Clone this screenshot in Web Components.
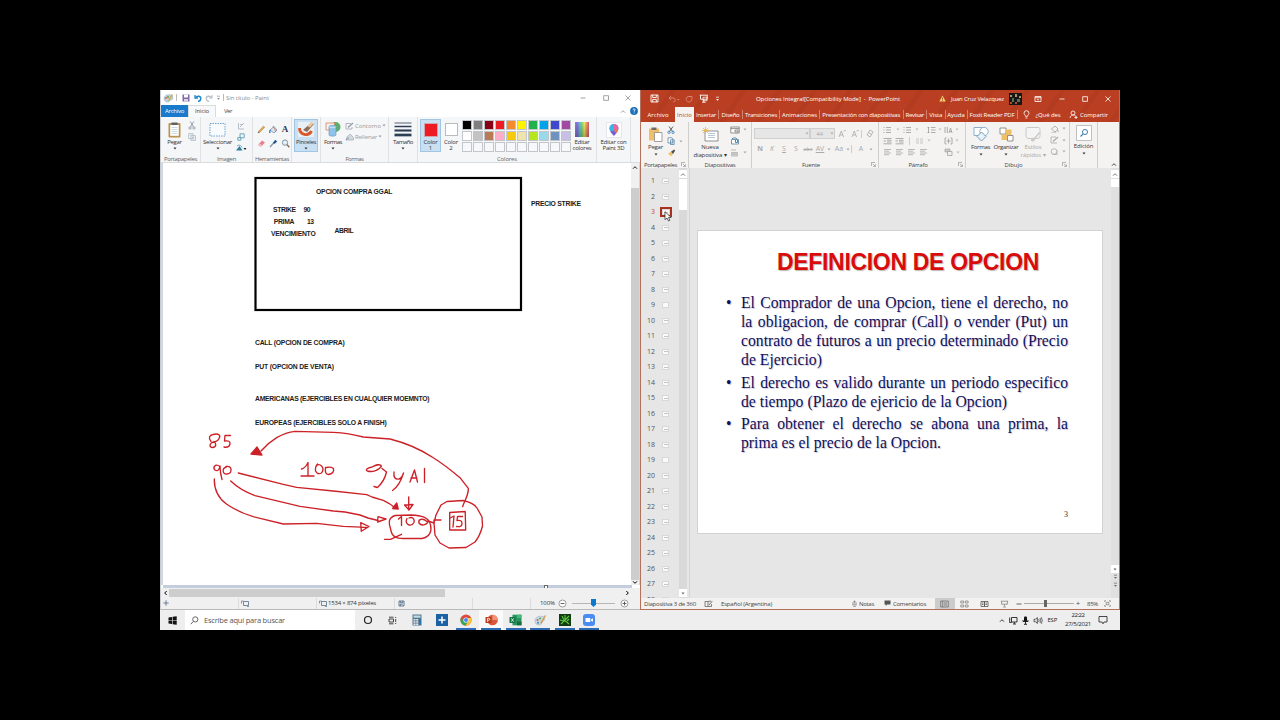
<!DOCTYPE html>
<html lang="es">
<head>
<meta charset="utf-8">
<title>Escritorio</title>
<style>
  body {
    margin: 0;
    width: 1280px;
    height: 720px;
    overflow: hidden;
    background: #000;
    font-family: "Open Sans", "Noto Sans", sans-serif;
    font-size: 6px;
    display: grid;
    place-items: center;
  }
</style>
</head>
<body>
<desk-top></desk-top>

<script>
const ICONS = {
  palette: [11, 10, '<path d="M1 6C1 2 5 1 8 2c3 1 2 5 0 5-2 0-1 2-3 2S1 8 1 6z" fill="#b9d3e2" stroke="#8ca6b4" stroke-width=".5"/><circle cx="3" cy="5" r="1" fill="#e56b3c"/><circle cx="5" cy="4" r="1" fill="#55a655"/><path d="M5 7l4-6 1 1-4 6z" fill="#e0a546"/>'],
  disk: [8, 8, '<path d="M.5.5h7v7h-7z" fill="#8268a6"/><path d="M2 .5h4v3H2z" fill="#fff"/><path d="M2 5h4v2.5H2z" fill="#d9d2e6"/>'],
  undo: [8, 8, '<path d="M1 1v3h3" fill="none" stroke="#2089c9" stroke-width="1.300"/><path d="M1.300 3.700C3 1.500 6.800 1.800 6.800 4.500c0 1.800-1.300 2.700-2.800 3" fill="none" stroke="#2089c9" stroke-width="1.500"/>'],
  redo: [8, 8, '<path d="M7 1v3H4" fill="none" stroke="#b8c0c8" stroke-width="1.100"/><path d="M6.700 3.700C5 1.500 1.200 1.800 1.200 4.500c0 1.800 1.300 2.700 2.800 3" fill="none" stroke="#b8c0c8" stroke-width="1.300"/>'],
  caret: [4, 3, '<path d="M.5.600h3L2 2.400z" fill="currentColor"/>'],
  quick: [5, 6, '<path d="M1 1.200h3" stroke="currentColor" stroke-width=".7"/><path d="M1 3h3L2.500 4.800z" fill="currentColor"/>'],
  min: [8, 8, '<path d="M1.500 4h5" stroke="currentColor" stroke-width=".8"/>'],
  max: [8, 8, '<path d="M1.700 1.700h4.800v4.600H1.700z" fill="none" stroke="currentColor" stroke-width=".8"/>'],
  close: [8, 8, '<path d="M1.500 1.500l5 5M6.500 1.500l-5 5" stroke="currentColor" stroke-width=".8"/>'],
  up: [6, 5, '<path d="M1 3.700l2-2 2 2" fill="none" stroke="currentColor" stroke-width=".9"/>'],
  down: [6, 5, '<path d="M1 1.300l2 2 2-2" fill="none" stroke="currentColor" stroke-width="1"/>'],
  left: [5, 6, '<path d="M3.700 1l-2 2 2 2" fill="none" stroke="currentColor" stroke-width="1"/>'],
  right: [5, 6, '<path d="M1.300 1l2 2-2 2" fill="none" stroke="currentColor" stroke-width="1"/>'],
  help: [8, 8, '<circle cx="4" cy="4" r="3.900" fill="#1b6fb8"/><path d="M3 3.100C3 1.500 5.200 1.600 5 3c-.1.800-1 .8-1 1.700M4 5.600v.8" stroke="#fff" stroke-width=".9" fill="none"/>'],
  clipboard: [15, 17, '<rect x="1.500" y="2" width="12" height="14.500" rx="1" fill="#b99254"/><rect x="3.200" y="4" width="8.600" height="10.800" fill="#fff"/><path d="M4.500 6.500h6M4.500 8.500h6M4.500 10.500h6M4.500 12.500h6" stroke="#b7c9dc" stroke-width=".7"/><path d="M4.500 1.500h6v2.500h-6z" fill="#5c6066"/>'],
  cut: [8, 9, '<path d="M2.300.5L5.500 6M5.700.5L2.500 6" stroke="#8c99a8" stroke-width=".9"/><circle cx="2" cy="7" r="1.200" fill="none" stroke="#8c99a8" stroke-width=".8"/><circle cx="6" cy="7" r="1.200" fill="none" stroke="#8c99a8" stroke-width=".8"/>'],
  copy: [8, 8, '<path d="M.6.600h4.500v5H.6zM3 2.600h4.500v5H3z" fill="#f3f5f8" stroke="#a6b1bf" stroke-width=".7"/><path d="M4 4.500h2.500M4 6h2.500M1.500 2h2" stroke="#a6b1bf" stroke-width=".5"/>'],
  marquee: [17, 15, '<path d="M1 1.500h15v12.500H1z" fill="#f9fcff" stroke="#4f8fc4" stroke-width=".8" stroke-dasharray="1.500 1"/>'],
  crop: [8, 8, '<path d="M1.500 1v6h5.500M3 5l4-4M3 2.500h3" fill="none" stroke="#a4b3bf" stroke-width=".8"/>'],
  resize: [8, 8, '<path d="M3 .8h4.200v4H3z" fill="none" stroke="#4a93ab" stroke-width=".8"/><path d="M.8 4.500h3v2.700h-3z" fill="#e8f4f8" stroke="#4a93ab" stroke-width=".8"/>'],
  rotate: [12, 8, '<path d="M1 6.500h6.500L4.500 2z" fill="#2e7f9e"/><path d="M2 2.200c2-2 4-1 5 1.300" fill="none" stroke="#54a0bc" stroke-width=".9"/><path d="M8.500 4h3L10 6z" fill="#222"/>'],
  pencil: [9, 9, '<path d="M1 8l1-2.200L6.500 1l1.300 1.200L3.200 7z" fill="#e0a94f" stroke="#9c7b45" stroke-width=".4"/><path d="M1 8l1.600-.7-.8-.9z" fill="#333"/>'],
  bucket: [9, 9, '<path d="M1 5l4-3.500L8 5 5 8z" fill="#dce8f1" stroke="#6e8295" stroke-width=".7"/><path d="M1.500 5C.5 6 .8 7.500 1 8" stroke="#3c82c0" stroke-width="1.400" fill="none"/><path d="M4 1l3 6" stroke="#c36a5a" stroke-width=".8"/>'],
  eraser: [9, 9, '<path d="M1 6l4-4.500L8 3.500 4 7.700z" fill="#e87f8c"/><path d="M1 6l3 1.700L5.300 6.400 2.500 4.400z" fill="#f5bfc4"/>'],
  dropper: [9, 9, '<path d="M1 8l4-4.500" stroke="#8496a8" stroke-width="1.300"/><path d="M4 3.500L6.300.8 8.200 2.600 5.500 5z" fill="#225a94"/>'],
  zoom: [9, 9, '<circle cx="4" cy="3.600" r="2.700" fill="#e4f0f8" stroke="#7e8c98" stroke-width=".9"/><path d="M6 5.600l2.300 2.600" stroke="#7e5f46" stroke-width="1.300"/>'],
  brush: [18, 17, '<path d="M1 1h16v15H1z" fill="#e8eff5"/><path d="M2.500 7c0 7 9 9 12 3" fill="none" stroke="#d8582c" stroke-width="2.800"/><path d="M6 9l8.500-7.500L17 3l-7 8z" fill="#8e6b58"/><path d="M10 5l4.500-4L17 2l-4 4.500z" fill="#e9c79f"/>'],
  shapes: [17, 17, '<circle cx="10.500" cy="6" r="5" fill="#5caf6a"/><path d="M1 2h8.500v7H1z" fill="#f2f4f6" stroke="#e18250" stroke-width=".8"/><path d="M4 5.500c0-1.500 7-1.500 7 0v8.500c0 1.500-7 1.500-7 0z" fill="#8fc3e9" stroke="#5a93c0" stroke-width=".6"/><path d="M4 5.500c0 1.300 7 1.300 7 0" fill="none" stroke="#fff" stroke-width=".6"/>'],
  outline: [9, 8, '<path d="M1 1.500h5M1 1.500v5.500h6V5" fill="none" stroke="#a9b0b8" stroke-width=".9"/><path d="M3 5.500L8 1" stroke="#8f99a5" stroke-width="1.200"/>'],
  fill: [9, 8, '<path d="M1 7h7.500V4.500L5 1 2 4z" fill="#d4d9de" stroke="#a0aab4" stroke-width=".7"/><path d="M1 7l3-2.500" stroke="#8896a5"/>'],
  sizes: [18, 17, '<path d="M.5 2h17" stroke="#2c3f56" stroke-width=".8"/><path d="M.5 5.500h17" stroke="#2c3f56" stroke-width="1.500"/><path d="M.5 9.500h17" stroke="#2c3f56" stroke-width="2.100"/><path d="M.5 14h17" stroke="#2c3f56" stroke-width="2.700"/>'],
  paint3d: [16, 16, '<path d="M.5.500h15v15H.5z" fill="#fff" stroke="#d5dbe1" stroke-width=".6"/><path d="M8 14C5 11 3.500 9 3.500 6.500a4.500 4.500 0 0 1 9 0C12.500 9 10.500 11 8 14z" fill="#7a5fd0"/><path d="M3.500 6.500A4.500 4.500 0 0 1 8 2v7H4.200z" fill="#38b6ea"/><path d="M8 2a4.500 4.500 0 0 1 4.500 4.500L8 8z" fill="#e66aa0"/><path d="M8 8l4.200-1.500-2 5z" fill="#f08052"/>'],
  cross: [6, 6, '<path d="M3 .3v5.400M.3 3h5.400" stroke="#60758a" stroke-width=".9"/>'],
  selsize: [8, 7, '<path d="M2.500 1.500h5v4h-5z" fill="none" stroke="#57708a" stroke-width=".8"/><path d="M.5 1v2.500M.5 1h2M6 6.500h2" stroke="#57708a" stroke-width=".7"/>'],
  diskline: [7, 7, '<path d="M1 1h5v5H1zM2.300 1v1.800h2.400V1M2.300 6V4.200h2.400" fill="none" stroke="#46617b" stroke-width=".8"/>'],
  minus: [9, 9, '<circle cx="4.500" cy="4.500" r="3.500" fill="#fff" stroke="#777" stroke-width=".7"/><path d="M2.600 4.500h3.800" stroke="#555" stroke-width=".9"/>'],
  plus: [9, 9, '<circle cx="4.500" cy="4.500" r="3.500" fill="#fff" stroke="#777" stroke-width=".7"/><path d="M2.600 4.500h3.800M4.500 2.600v3.800" stroke="#555" stroke-width=".9"/>'],
  // PowerPoint
  save: [9, 9, '<path d="M1 1h7v7H1zM2.700 1v2.500h3.600V1M2.700 8V5.400h3.600V8" fill="none" stroke="#fff" stroke-width=".9"/>'],
  pundo: [12, 8, '<path d="M1 3h4c3 0 3 4 0 4M1 3l2-2M1 3l2 2" fill="none" stroke="#d98a75" stroke-width=".9"/><path d="M9 4h2.500l-1.200 1.500z" fill="#d98a75"/>'],
  predo: [8, 8, '<path d="M5.500 1.800A2.800 2.800 0 1 0 6.800 4M4 1.500h3v2.300" fill="none" stroke="#d98a75" stroke-width=".9"/>'],
  show: [10, 9, '<path d="M.7 1.200h8M1.500 1.200v4h6.700v-4M4.800 5.200v3M3 8.200h3.600" fill="none" stroke="#fff" stroke-width=".9"/><path d="M4 3.200h4v3.500H4z" fill="none" stroke="#fff" stroke-width=".7"/>'],
  warn: [7, 7, '<path d="M3.500.400l3.200 6.200H.3z" fill="#f7d36b"/><path d="M3.500 2.500v2M3.500 5.200v.7" stroke="#8b3a20" stroke-width=".8"/>'],
  avatar: [13, 12, '<path d="M0 0h13v12H0z" fill="#161718"/><path d="M1 2h2v2H1zM6 1h2v3H6zM10 3h2v2h-2z" fill="#a8946a"/><path d="M3 5h2v4H3zM8 6h3v3H8z" fill="#5b6f4e"/><path d="M1 9h2v2H1zM6 9h2v2H6z" fill="#b04a34"/>'],
  ribbonopt: [8, 8, '<path d="M1 1.500h6v5H1zM1 2.700h6" fill="none" stroke="#fff" stroke-width=".8"/><path d="M4 5.800V4M3 4.800l1-1 1 1" fill="none" stroke="#fff" stroke-width=".6"/>'],
  bulb: [7, 9, '<path d="M2.500 6.300C2.500 5 1 4.500 1 3.200a2.500 2.500 0 0 1 5 0C6 4.500 4.500 5 4.500 6.300zM2.500 8h2" fill="none" stroke="#fff" stroke-width=".8"/>'],
  share: [9, 9, '<circle cx="4" cy="3" r="2" fill="none" stroke="#fff" stroke-width=".8"/><path d="M1 8c0-3 5-4 6-1.500M5.500 7.500h3M7 6v3" fill="none" stroke="#fff" stroke-width=".8"/>'],
  ppaste: [16, 17, '<path d="M1 2.500h10v12H1z" fill="#f0bf6c"/><path d="M3.500 1.500h5v2.500h-5z" fill="#6c6c6c"/><path d="M6.500 6.500h7.500v9H6.500z" fill="#fff" stroke="#8a8a8a" stroke-width=".8"/>'],
  pcut: [8, 8, '<path d="M2 .5l3.500 5M6 .5L2.500 5.500" stroke="#555" stroke-width=".9"/><circle cx="2" cy="6.300" r="1.200" fill="none" stroke="#2f7ab8" stroke-width=".8"/><circle cx="6" cy="6.300" r="1.200" fill="none" stroke="#2f7ab8" stroke-width=".8"/>'],
  pcopy: [9, 8, '<path d="M1 .8h4l.8 1V6H1zM3.500 2.800h3.700v4.700H3.500z" fill="#fff" stroke="#5c87a8" stroke-width=".8"/><path d="M4.500 4.500h2M4.500 6h2" stroke="#5c87a8" stroke-width=".6"/>'],
  format: [9, 8, '<path d="M1 4.500l3 3L6 5 4 2.800z" fill="#efc36e"/><path d="M4 2.800l2 2.200L8.200 1.500 7 .6z" fill="#4f4f4f"/>'],
  newslide: [17, 15, '<path d="M3 4h13v10H3z" fill="#fff" stroke="#777" stroke-width=".8"/><path d="M6 8.500h7M6 10.500h7M6 6.500h7" stroke="#9bb1c2" stroke-width=".7"/><path d="M3.500 0v7M0 3.500h7M1 1l5 5M6 1L1 6" stroke="#eab14a" stroke-width=".8"/>'],
  layout: [10, 8, '<path d="M.8 1h8.400v6H.8zM.8 2.600h8.400M5 4h3v2H5z" fill="#fff" stroke="#777" stroke-width=".8"/>'],
  reset: [10, 8, '<path d="M1.500 2.500h7V7h-7z" fill="#fff" stroke="#55839f" stroke-width=".8"/><path d="M2 2c1-1.500 4-1.500 5 0M5.500 3v2.500h2V3" fill="none" stroke="#3a78a0" stroke-width=".9"/>'],
  section: [10, 8, '<path d="M1 1h5M1.500 3.500h6v1.300h-6zM1.500 5.700h6V7h-6z" fill="none" stroke="#aaa" stroke-width=".8"/>'],
  growA: [8, 9, '<path d="M1 8l2.300-6L5.600 8M1.700 6h3.200M5.800 2.300L6.800 1l1 1.300" fill="none" stroke="#aaa" stroke-width=".8"/>'],
  clear: [8, 9, '<path d="M1 6l3-5 3 2-3 5zM2.500 3.500l3 2" fill="none" stroke="#b0b0b0" stroke-width=".9"/>'],
  list: [9, 8, '<path d="M.5 1.500h1M.5 4h1M.5 6.500h1M3 1.500h5M3 4h5M3 6.500h5" stroke="#999" stroke-width=".8"/>'],
  spacing: [9, 8, '<path d="M1.500 1v6M.5 2l1-1 1 1M.5 6l1 1 1-1M4 1.500h4.500M4 4h4.500M4 6.500h4.500" fill="none" stroke="#999" stroke-width=".8"/>'],
  textdir: [9, 8, '<path d="M1 1v6M3.300 1v6M5 7l1.500-5L8 7M5.500 5.500h2" fill="none" stroke="#999" stroke-width=".8"/>'],
  indent: [9, 8, '<path d="M.5 1.500h8M4 3.300h4.500M4 5h4.500M.5 6.800h8M.5 4h2.500" stroke="#999" stroke-width=".8"/>'],
  columns: [9, 8, '<path d="M1 2h3M5 2h3M1 4h3M5 4h3M1 6h3M5 6h3" stroke="#bbb" stroke-width=".8"/>'],
  align: [9, 8, '<path d="M1 1.500h7M1 3.200h5M1 5h7M1 6.700h5" stroke="#aaa" stroke-width=".8"/>'],
  vert: [9, 8, '<path d="M2.500 1H1v6h1.500M6.500 1H8v6H6.500M2.500 4h4M4.500 1.500v5" fill="none" stroke="#999" stroke-width=".8"/>'],
  smart: [9, 8, '<path d="M1 1h5v3H1z" fill="#ccc" stroke="#999" stroke-width=".6"/><path d="M3.500 3.500H8V7.500H3.500z" fill="#eee" stroke="#999" stroke-width=".7"/>'],
  pshapes: [16, 16, '<path d="M1 1.500h8v8H1z" fill="#fff" stroke="#6f9dc0" stroke-width=".8"/><circle cx="11" cy="5.500" r="4.200" fill="#fff" stroke="#6f9dc0" stroke-width=".8"/><path d="M8.500 6l4.500 4.500L8.500 15 4 10.500z" fill="#e9f2f9" stroke="#4f86b0" stroke-width=".8"/>'],
  arrange: [15, 15, '<path d="M1 1h6v6H1z" fill="#fff" stroke="#777" stroke-width=".8"/><path d="M7 2.500h5.500V8H7zM2.500 7.500H8V13H2.500z" fill="#efbf66"/><path d="M8.500 8.500h5.500V14H8.500z" fill="#fff" stroke="#777" stroke-width=".8"/>'],
  styles: [16, 17, '<path d="M3 1.500h10c2 0 2 1 2 3v5c0 2-1 3-3 3H4c-2 0-3-1-3-3v-5c0-2 0-3 2-3z" fill="#f4f4f4" stroke="#bdbdbd" stroke-width=".8"/><path d="M6 15c0-3 1-4 3-3l5-6 1 1-5 6c0 2-2 3-4 2z" fill="#c9c9c9"/>'],
  bucket2: [9, 8, '<path d="M1.500 4L5 1l3 3-3 3zM8 5v2" fill="none" stroke="#aaa" stroke-width=".9"/><path d="M1.500 7.500h5" stroke="#ccc"/>'],
  pen2: [9, 8, '<path d="M6 1H1v6h6" fill="none" stroke="#aaa" stroke-width=".8"/><path d="M3 5.500l5-4.500" stroke="#aaa" stroke-width="1.200"/>'],
  effect: [9, 8, '<path d="M2.500 2h5v5h-5z" fill="#c2c2c2"/><circle cx="4" cy="3.500" r="2.800" fill="#f4f4f4" stroke="#aaa" stroke-width=".8"/>'],
  find: [16, 16, '<path d="M.5.500h15v15H.5z" fill="#fff" stroke="#a8a8a8" stroke-width=".7"/><circle cx="9" cy="7" r="2.500" fill="none" stroke="#3f7fae" stroke-width="1"/><path d="M7 9l-2.500 2.500" stroke="#3f7fae" stroke-width="1.100"/>'],
  launch: [5, 5, '<path d="M.5 4V.5H4M2 2l2.300 2.300M4.400 2.300v2.200H2.200" fill="none" stroke="#888" stroke-width=".6"/>'],
  spell: [9, 8, '<path d="M1 1.500h3v5H1zM4 1.500l3-.5M4 6.500h3.500V4" fill="none" stroke="#666" stroke-width=".8"/><path d="M5 5l3.300-4" stroke="#666" stroke-width=".9"/>'],
  notes: [7, 7, '<path d="M1 3h5M1 4.700h5M2 6.300h3M3.500 2.500V.5M2.500 1.500h2" stroke="#777" stroke-width=".7"/>'],
  comment: [7, 7, '<path d="M.5.500h6v4H3L1.800 6.300V4.500H.5z" fill="#555"/>'],
  normal: [9, 8, '<path d="M.7 1h7.600v6H.7zM2.700 1v6M4 3h3M4 5h3" fill="none" stroke="#666" stroke-width=".7"/>'],
  sorter: [9, 8, '<path d="M.8 1h2.800v2H.8zM5.300 1h2.800v2H5.300zM.8 5h2.800v2H.8zM5.300 5h2.800v2H5.300z" fill="none" stroke="#777" stroke-width=".7"/>'],
  reading: [9, 8, '<path d="M1 1.500h3.500V6.500H1zM4.500 1.500H8V6.500H4.500zM2 3h1.500M2 4.500h1.500M5.500 3H7M5.500 4.500H7" fill="none" stroke="#555" stroke-width=".8"/>'],
  screen: [9, 8, '<path d="M.8 1.200h7.400M1.600 1.200v3h5.800v-3M4.500 4.200v2M3 7h3" fill="none" stroke="#777" stroke-width=".7"/>'],
  fit: [7, 7, '<path d="M.7 2V.7H2M5 .7h1.300V2M6.300 5v1.300H5M2 6.300H.7V5M2.200 2.300h2.600v2.400H2.200z" fill="none" stroke="#777" stroke-width=".7"/>'],
  // barra de tareas
  windows: [9, 9, '<path d="M.5 1.400L4 .9v3.300H.5zM4.600.8L8.700.2v4H4.600zM.5 4.800H4v3.300L.5 7.600zM4.600 4.800h4.100v4L4.600 8.200z" fill="#111"/>'],
  search: [9, 9, '<circle cx="5.300" cy="3.400" r="2.600" fill="none" stroke="#555" stroke-width=".9"/><path d="M3.400 5.400L.8 8.200" stroke="#555" stroke-width=".9"/>'],
  cortana: [10, 10, '<circle cx="5" cy="5" r="3.500" fill="none" stroke="#222" stroke-width="1.200"/>'],
  taskview: [9, 9, '<path d="M1 1.200h4.500M1 3h4.500v3H1zM1 7.800h4.500M7.700 1v1M7.700 3v3M7.700 7v1" fill="none" stroke="#333" stroke-width=".9"/>'],
  calc: [10, 12, '<path d="M.5.500h9v11h-9z" fill="#5f7688"/><path d="M1.500 1.500h7v2.200h-7z" fill="#bcdff0"/><path d="M1.500 5h2v1.500h-2zM4.200 5h2v1.500h-2zM1.500 7.300h2v1.500h-2zM4.200 7.300h2v1.500h-2zM1.500 9.500h2V11h-2zM4.200 9.500h2V11h-2z" fill="#e6edf1"/><path d="M7 5h2v6H7z" fill="#2476b5"/>'],
  plusapp: [12, 12, '<path d="M0 0h12v12H0z" fill="#1b62a5"/><path d="M6 2.500v7M2.500 6h7" stroke="#fff" stroke-width="1.500"/>'],
  chrome: [12, 12, '<circle cx="6" cy="6" r="5.600" fill="#dd4b3e"/><path d="M1.150 3.200A5.600 5.600 0 0 0 5.500 11.580L8.400 7.300 3.600 7.300z" fill="#3aa757"/><path d="M11.200 4A5.600 5.600 0 0 1 5.500 11.580L8.400 7.300 8 4z" fill="#f8c933"/><circle cx="6" cy="6" r="2.600" fill="#fff"/><circle cx="6" cy="6" r="2" fill="#4285f4"/>'],
  ppt: [13, 12, '<circle cx="7.500" cy="6" r="5.300" fill="#d9583a"/><path d="M7.500.7a5.300 5.300 0 0 1 5.300 5.300H7.500z" fill="#f2937a"/><path d="M.5 3h6v6h-6z" fill="#b93c1f"/><path d="M2.500 7.800V4.300h1.300c1.300 0 1.300 2 0 2H2.500" fill="none" stroke="#fff" stroke-width=".8"/>'],
  excel: [13, 12, '<path d="M3.500.7h9v10.600h-9z" fill="#2a9560"/><path d="M8 .7h4.500V4H8z" fill="#44bb7b"/><path d="M8 7.500h4.500v3.800H8z" fill="#176a3e"/><path d="M.5 3h6v6h-6z" fill="#107440"/><path d="M2.200 4.300l2.600 3.500M4.800 4.300L2.200 7.800" stroke="#fff" stroke-width=".8"/>'],
  paintapp: [13, 12, '<path d="M1 7C1 3 5 1.500 9 2.500c3 1 1 4.500 0 5-2 1-1 3.500-4 3.500S1 9 1 7z" fill="#c9dce8" stroke="#8fa7b7" stroke-width=".5"/><circle cx="3.500" cy="6" r="1" fill="#d8574a"/><circle cx="6" cy="4.500" r="1" fill="#53a653"/><circle cx="4" cy="8.700" r="1" fill="#4a7fd0"/><path d="M6 9l5-8 1 .7-4.600 8z" fill="#d99b44"/>'],
  greenapp: [12, 12, '<path d="M0 0h12v12H0z" fill="#123c14"/><path d="M2 10L10 2M3 2l2 4 5 4M6 1v4M1 6l4 1M8 7l2-2" stroke="#5dcb3c" stroke-width="1.100" fill="none"/>'],
  zoomapp: [12, 12, '<rect width="12" height="12" rx="3" fill="#4a8cf2"/><path d="M2.500 4h4.800v4H2.500zM8 5.500L10 4.300v3.500L8 6.700z" fill="#fff"/>'],
  network: [9, 9, '<path d="M2.500 1.500H8V6H2.500zM4 8h3M5.300 6v2M.7 3v3.500h2M.7 1.500v2" fill="none" stroke="#222" stroke-width=".9"/>'],
  mic: [7, 9, '<rect x="2" y=".5" width="3" height="5" rx="1" fill="#111"/><path d="M1 4v1.500h5V4M3.500 6v2M2 8.300h3" fill="none" stroke="#111" stroke-width=".9"/>'],
  volume: [10, 9, '<path d="M1 3.300h1.500L4.300 1.500v6L2.500 5.700H1z" fill="none" stroke="#333" stroke-width=".8"/><path d="M5.700 3q.8 1.500 0 3M7 2q1.500 2.500 0 5M8.300 1.200q2 3.300 0 6.600" fill="none" stroke="#333" stroke-width=".7"/>'],
  bell: [10, 10, '<path d="M1 1.500h8v5.500H6L5 8.800 4 7H1z" fill="none" stroke="#333" stroke-width=".9"/>'],
  cursor: [8, 11, '<path d="M1 .7v8l2-1.700L4.500 10l1.300-.6L4.500 6.500h2.700z" fill="#fff" stroke="#222" stroke-width=".7"/>']
}

class UiIcon extends HTMLElement {
  connectedCallback() {
    const [w, h, body] = ICONS[this.getAttribute('name')]
    this.attachShadow({ mode: 'open' }).innerHTML = `
      <style>
        :host { display: inline-flex; justify-content: center; align-items: center; flex: none; }
        svg { display: block; flex: none; }
      </style>
      <svg width="${w}" height="${h}" viewBox="0 0 ${w} ${h}">${body}</svg>
    `
  }
}
customElements.define('ui-icon', UiIcon)

// One line of text whose tracking is tuned so that it spans the "w" attribute.
class UiLabel extends HTMLElement {
  connectedCallback() {
    this.attachShadow({ mode: 'open' }).innerHTML = `
      <style>
        :host { display: inline-flex; justify-content: center; flex: none; white-space: pre; line-height: 8px; }
        span { display: inline-block; }
      </style>
      <span><slot></slot></span>
    `
    const target = parseFloat(this.getAttribute('w'))
    if (!target) return
    const span = this.shadowRoot.querySelector('span')
    const gap = (target - span.getBoundingClientRect().width) / this.textContent.length
    span.style.letterSpacing = gap.toFixed(3) + 'px'
  }
}
customElements.define('ui-label', UiLabel)

class RibbonGroup extends HTMLElement {
  connectedCallback() {
    const label = this.getAttribute('label')
    this.attachShadow({ mode: 'open' }).innerHTML = `
      <style>
        :host { display: flex; flex-direction: column; box-sizing: border-box; height: 100%; flex: none; position: relative; border-right: 1px solid var(--line, #e0e1e2); }
        .body { flex: 1; display: flex; min-height: 0; }
        .foot { height: 7.500px; display: flex; justify-content: center; color: var(--foot, #666); }
        :host([launch]) .foot { padding-right: 8px; }
        .launch { position: absolute; right: 2px; bottom: 1px; }
      </style>
      <div class="body"><slot></slot></div>
      <div class="foot">${label ? `<ui-label w="${this.getAttribute('lw')}">${label}</ui-label>` : ''}</div>
      ${this.hasAttribute('launch') ? '<ui-icon class="launch" name="launch"></ui-icon>' : ''}
    `
  }
}
customElements.define('ribbon-group', RibbonGroup)

// Large ribbon button: picture, one or two lines of text, optional caret.
class BigButton extends HTMLElement {
  connectedCallback() {
    const icon = this.getAttribute('icon')
    const lines = this.getAttribute('text').split('|')
    const widths = this.getAttribute('lw').split('|')
    this.attachShadow({ mode: 'open' }).innerHTML = `
      <style>
        :host { display: flex; flex-direction: column; align-items: center; flex: none; box-sizing: border-box; }
        :host([on]) { background: #c9e0f3; border: 1px solid #a0c6e4; margin: 2px 0 1px; height: 33px; }
        :host([on]) .pic { margin-top: 0; }
        :host([grey]) { color: #aaa; }
        .pic { height: var(--pic, 19px); margin-top: 3px; display: flex; align-items: center; }
        ui-label { line-height: var(--lh, 6px); }
        .caret { height: 6px; display: flex; align-items: center; }
      </style>
      <div class="pic">${icon ? `<ui-icon name="${icon}"></ui-icon>` : '<slot></slot>'}</div>
      ${lines.map((line, i) => `<ui-label w="${widths[i]}">${line}</ui-label>`).join('')}
      ${this.hasAttribute('caret') ? '<div class="caret"><ui-icon name="caret"></ui-icon></div>' : ''}
    `
  }
}
customElements.define('big-button', BigButton)

const PALETTE = ['#000', '#7f7f7f', '#880015', '#ed1c24', '#f58a2c', '#fff200', '#22b14c', '#00a2e8', '#3f48cc', '#a349a4',
  '#fff', '#c3c3c3', '#b97a57', '#ffaec9', '#f6c80e', '#efe4b0', '#b5e61d', '#99d9ea', '#7092be', '#c8bfe7']

class ColorPalette extends HTMLElement {
  connectedCallback() {
    let cells = ''
    for (let i = 0; i < 30; i++) cells += `<i style="background:${PALETTE[i] || '#f7f8f9'}"></i>`
    this.attachShadow({ mode: 'open' }).innerHTML = `
      <style>
        :host { display: grid; grid-template-columns: repeat(10, 10px); grid-auto-rows: 10px; gap: 1px; align-content: start; }
        i { border: 1px solid #c2c5c9; box-sizing: border-box; }
      </style>
      ${cells}
    `
  }
}
customElements.define('color-palette', ColorPalette)

class PaintRibbon extends HTMLElement {
  connectedCallback() {
    this.attachShadow({ mode: 'open' }).innerHTML = `
      <style>
        :host { display: flex; height: 46px; background: #f5f6f7; border-bottom: 1px solid #dadbdc; box-sizing: border-box; color: #333; }
        .col { display: flex; flex-direction: column; padding-top: 3px; }
        .col > * { height: 11px; }
        .tools { display: grid; grid-template-columns: repeat(3, 12px); grid-auto-rows: 13.500px; padding: 6px 0 0 2px; align-content: start; }
        .line { display: flex; align-items: center; color: #9a9a9a; }
        .swatch { width: 14px; height: 14px; background: #ed1c24; border: 1px solid #d6a4a8; box-sizing: border-box; }
        .white { background: #fff; border-color: #b8bcc0; width: 13px; height: 13px; }
        .rainbow { width: 14px; height: 15px; background: linear-gradient(rgba(255,255,255,.2), rgba(90,90,90,.4)), linear-gradient(90deg, #a24ec0, #5a54d8, #3fb0d8, #5ed04a, #e8e440, #ea7c38, #cf3360); }
        color-palette { padding: 3px 0 0 1px; width: 109px; }
      </style>
      <ribbon-group label="Portapapeles" lw="33" style="width:40px">
        <big-button icon="clipboard" text="Pegar" lw="14.500" caret style="width:27px"></big-button>
        <div class="col"><ui-icon name="cut"></ui-icon><ui-icon name="copy"></ui-icon></div>
      </ribbon-group>
      <ribbon-group label="Imagen" lw="19" style="width:52px">
        <big-button icon="marquee" text="Seleccionar" lw="29" caret style="width:33px"></big-button>
        <div class="col" style="padding-left:1px"><ui-icon name="crop"></ui-icon><ui-icon name="resize"></ui-icon><ui-icon name="rotate"></ui-icon></div>
      </ribbon-group>
      <ribbon-group label="Herramientas" lw="34" style="width:39px">
        <div class="tools">
          <ui-icon name="pencil"></ui-icon><ui-icon name="bucket"></ui-icon>
          <b style="font:bold 9px/13px 'Liberation Serif',serif;text-align:center;color:#24364c">A</b>
          <ui-icon name="eraser"></ui-icon><ui-icon name="dropper"></ui-icon><ui-icon name="zoom"></ui-icon>
        </div>
      </ribbon-group>
      <ribbon-group style="width:29px">
        <big-button on icon="brush" text="Pinceles" lw="20" caret style="width:24px;margin-left:2px"></big-button>
      </ribbon-group>
      <ribbon-group label="Formas" lw="18" style="width:68px">
        <big-button icon="shapes" text="Formas" lw="18" caret style="width:24px"></big-button>
        <div class="col">
          <div class="line"><ui-icon name="outline"></ui-icon><ui-label w="26" style="margin:0 1px">Contorno</ui-label><ui-icon name="caret"></ui-icon></div>
          <div class="line"><ui-icon name="fill"></ui-icon><ui-label w="22" style="margin:0 1px">Rellenar</ui-label><ui-icon name="caret"></ui-icon></div>
        </div>
      </ribbon-group>
      <ribbon-group style="width:29px">
        <big-button icon="sizes" text="Tamaño" lw="20" caret style="width:28px"></big-button>
      </ribbon-group>
      <ribbon-group label="Colores" lw="20" style="width:179px">
        <big-button on text="Color|1" lw="14|0" style="width:21px;margin-left:2px"><div class="swatch"></div></big-button>
        <big-button text="Color|2" lw="14|0" style="width:20px"><div class="swatch white"></div></big-button>
        <color-palette></color-palette>
        <big-button text="Editar|colores" lw="15|19" style="width:22px"><div class="rainbow"></div></big-button>
      </ribbon-group>
      <ribbon-group style="width:34px">
        <big-button icon="paint3d" text="Editar con|Paint 3D" lw="26|22" style="width:33px"></big-button>
      </ribbon-group>
    `
  }
}
customElements.define('paint-ribbon', PaintRibbon)

// Drawing surface: typed text and freehand strokes in desktop coordinates.
class PaintCanvas extends HTMLElement {
  connectedCallback() {
    this.attachShadow({ mode: 'open' }).innerHTML = `
      <style>
        :host { display: block; background: #fff; }
        svg { display: block; }
        text { font: bold 6.800px "Liberation Sans", Arial, sans-serif; fill: #1c1c1c; }
        .ink { fill: none; stroke: #cc2127; stroke-width: 1.350; stroke-linecap: round; stroke-linejoin: round; }
      </style>
      <svg width="468" height="422" viewBox="163 163 468 422">
        <rect x="255.500" y="178" width="265.500" height="132" fill="none" stroke="#000" stroke-width="2.200"/>
        <text x="316" y="194.300" textLength="76.500">OPCION COMPRA GGAL</text>
        <text x="273" y="212" textLength="23">STRIKE</text>
        <text x="303.500" y="211.500" textLength="7">90</text>
        <text x="273.700" y="223.500" textLength="20.800">PRIMA</text>
        <text x="307" y="223.500" textLength="7">13</text>
        <text x="271" y="235.500" textLength="44.700">VENCIMIENTO</text>
        <text x="334.500" y="233" textLength="19.200">ABRIL</text>
        <text x="531" y="206.400" textLength="50">PRECIO STRIKE</text>
        <text x="255" y="345" textLength="89.700">CALL (OPCION DE COMPRA)</text>
        <text x="255" y="369" textLength="79">PUT (OPCION DE VENTA)</text>
        <text x="255" y="401" textLength="174.500">AMERICANAS (EJERCIBLES EN CUALQUIER MOEMNTO)</text>
        <text x="255" y="425" textLength="131.700">EUROPEAS (EJERCIBLES SOLO A FINISH)</text>
        <g class="ink">
          <path d="M462.700 506.700C464 501 469 495 468.300 488.300L460 477.700Q445 465 433.300 457.700 414 445 390 439L363.300 437Q349 433 333.300 432.300L295 431.300Q286 432 276.700 437.700 268 443 261 451"/>
          <path d="M251 454l6-7 5 8z" fill="#cc2127"/>
          <path d="M238.300 473L283.300 484.300 296.700 487.300 333.300 491 366.700 494.700 372 497 383.300 500.300Q391 504 395 507.700"/>
          <path d="M392.700 508.500l4-5.500 1.500 6z" fill="#cc2127"/>
          <path d="M230.700 481Q240 490 255 495.700L300 506.300 333.300 511 345 512 360 515 368 518 378 520.500M378 516.700l8 2.300-8.500 3z"/>
          <path d="M214.300 479Q214 495 226.700 504.300 240 513 253.300 516.700L283.300 524 316.700 523.300 343.300 526.300 366.700 527.300M360.700 522.700l8.300 3.800-7.700 4.800z"/>
          <path d="M408.700 497v13M404.500 505l4.500 5 4-5.500z"/>
          <path d="M395 515.500C386 519 390 525 391 531 393 539 400 538.500 408 538.500L422 538.500C430 537 432 531 430.500 525 429 517 421 515.500 411 515z"/>
          <path d="M384.500 539.300h6l11-5M398.500 519l3-2.500v9M407 518.500c-3 6 4 9 7 4 1-4-2-6-5-4.500M427 521.500c-5-4-9-2-8 1.500 3 4 9 1 9-2l6 2"/>
          <path d="M441 505L447 501.500 463 500.500Q474 503 477 508L482 517 482.500 526Q480 536 475 542L466 547.500 449 548 440 543 435 535 434 523 436 515 441 505M434 523v-3h7"/>
          <path d="M449.700 512.500l15.500-1 .5 18.500h-16z"/>
          <path d="M450 518l4-2-1 11M462.500 516.500h-5l-.5 4q5-1 5 3 0 4-5.500 3"/>
          <path d="M211 441.500C208 438 209.500 435 213 434.500c6-1.500 8 1 6 4-1 3-4 3.500-7 4-3 2-2.500 5 .5 5 4-.5 4-4 1.500-6M230.500 435.500h-5.500l-.5 5.500q6-1 5.500 3-1 4-6 3"/>
          <path d="M220 466.500c-5-3.500-7.500 1-5 3.500 3 2 4.500-1 5-4 0 5 .5 8 2 13.500M226.500 467c-5 1-4 8 .5 7 6-1 5-9-1-7.500"/>
          <path d="M301.500 469q4-1 6.500-6.500v13.500M301 476h13M317.500 464q-2.500 3-2 7 2 4 6 2 3-4 0-7-2-2-4-1M325.500 467.500q-1 7 3 7 6-1 5-6-3-2-7-1"/>
          <path d="M381 465.500c-2-2-5-.5-9 1.500-5 1-7 3-4.500 4 5 1.500 12-1 14-5M382 468.500l4.500 3.500q-2 9-9 15.500l-3.500-1M394 472q-1 8 5 7 3-1 4.500-6-4 13-11 17.500M410 482l4.500-12 3 12M411 478h6M424.500 468.500v14"/>
        </g>
      </svg>
    `
  }
}
customElements.define('paint-canvas', PaintCanvas)

class PaintWindow extends HTMLElement {
  connectedCallback() {
    this.attachShadow({ mode: 'open' }).innerHTML = `
      <style>
        :host { display: flex; flex-direction: column; width: 480px; height: 520px; box-sizing: border-box; border-left: 1px solid #c9ccd1; background: #fff; }
        .bar, .status, .hscroll { display: flex; align-items: center; }
        .bar { height: 15px; padding-left: 1px; color: #8c8c8c; }
        .bar > ui-icon { width: 11px; }
        .sep { width: 1px; height: 7px; background: #bbb; margin: 0 2px; }
        .tabs { display: flex; align-items: center; height: 12px; color: #444; }
        .file { background: #1979ca; color: #fff; width: 27px; height: 12px; }
        .tabs ui-label { line-height: 12px; }
        .on { width: 28px; height: 12px; background: #f8f9fa; border: solid #dadbdc; border-width: 1px 1px 0; box-sizing: border-box; }
        .grow { flex: 1; }
        .work { display: flex; height: 422px; background: #cfd7e5; }
        paint-canvas { margin-left: 2px; width: 468px; }
        .vscroll { width: 8px; background: #cdcdcd; display: flex; flex-direction: column; align-items: center; justify-content: space-between; }
        .vscroll div { background: #f0f0f0; width: 8px; display: flex; justify-content: center; align-items: flex-start; }
        .edge { height: 3px; background: #c4cddd; margin: 0 8px 0 2px; display: flex; justify-content: flex-end; }
        .edge i { width: 2px; height: 2px; border: .5px solid #666; background: #fff; margin-right: 84px; }
        .hscroll { height: 9px; background: #f0f0f0; }
        .thumb { width: 276px; height: 8px; background: #cdcdcd; }
        .status { height: 12px; background: #f0f0f0; color: #333; border-bottom: 1px solid #b9b9b9; }
        .cell { height: 11px; display: flex; align-items: center; border-right: 1px solid #dcdcdc; box-sizing: border-box; padding-left: 2px; }
        .slider { width: 43px; height: 9px; margin: 0 5px; display: flex; align-items: center; justify-content: center; background: linear-gradient(#b7b7b7, #b7b7b7) center / 100% 1px no-repeat; }
        .slider b { width: 5px; height: 8px; background: #0b78d0; clip-path: polygon(0 0, 100% 0, 100% 70%, 50% 100%, 0 70%); }
      </style>
      <div class="bar">
        <ui-icon name="palette" style="width:12px"></ui-icon><i class="sep"></i><ui-icon name="disk" style="width:12px;margin-left:1px"></ui-icon>
        <ui-icon name="undo"></ui-icon><ui-icon name="redo"></ui-icon><ui-icon name="quick" style="width:8px"></ui-icon><i class="sep" style="margin-left:1px"></i>
        <ui-label w="43">Sin título - Paint</ui-label>
        <div class="grow"></div>
        <ui-icon name="min" style="width:23px"></ui-icon><ui-icon name="max" style="width:23px"></ui-icon><ui-icon name="close" style="width:22px;margin-right:1px"></ui-icon>
      </div>
      <div class="tabs">
        <ui-label class="file" w="19">Archivo</ui-label><ui-label class="on" w="14" style="line-height:11px">Inicio</ui-label>
        <ui-label w="8" style="width:24px">Ver</ui-label>
        <div class="grow"></div>
        <ui-icon name="up" style="color:#999"></ui-icon><ui-icon name="help" style="margin:0 2px 0 4px"></ui-icon>
      </div>
      <paint-ribbon></paint-ribbon>
      <div class="work">
        <paint-canvas></paint-canvas>
        <div class="vscroll"><div style="height:25px"><ui-icon name="up" style="height:9px"></ui-icon></div><div><ui-icon name="down"></ui-icon></div></div>
      </div>
      <div class="edge"><i></i></div>
      <div class="hscroll"><ui-icon name="left" style="width:8px"></ui-icon><div class="thumb"></div><div class="grow"></div><ui-icon name="right" style="margin-right:10px"></ui-icon></div>
      <div class="status">
        <div class="cell" style="width:78px"><ui-icon name="cross"></ui-icon></div>
        <div class="cell" style="width:78px"><ui-icon name="selsize"></ui-icon></div>
        <div class="cell" style="width:78px"><ui-icon name="selsize"></ui-icon><ui-label w="48" style="margin-left:1px">1534 × 874 píxeles</ui-label></div>
        <div class="cell" style="width:78px"><ui-icon name="diskline" style="margin-left:1px"></ui-icon></div>
        <div class="cell" style="width:58px"></div>
        <div class="grow"></div>
        <ui-label w="15">100%</ui-label><ui-icon name="minus" style="margin-left:3px"></ui-icon>
        <div class="slider"><b></b></div>
        <ui-icon name="plus" style="margin-right:11px"></ui-icon>
      </div>
    `
  }
}
customElements.define('paint-window', PaintWindow)

class SlidesRibbon extends HTMLElement {
  connectedCallback() {
    this.attachShadow({ mode: 'open' }).innerHTML = `
      <style>
        :host { display: flex; height: 46px; background: #f4f3f2; color: #333; --line: #cfcfcf; --foot: #444; --lh: 8px; --pic: 18px; }
        .col { display: flex; flex-direction: column; padding-top: 1px; }
        .col > div { height: 11.600px; display: flex; align-items: center; }
        .col > div > ui-icon:first-child { width: 12px; }
        .c { color: #aaa; margin: 0 2px; }
        .rows { display: flex; flex-direction: column; color: #aaa; }
        .row { display: flex; align-items: center; }
        .row > * { flex: none; }
        .combo { height: 11px; background: #e6e6e6; border: 1px solid #cfcfcf; box-sizing: border-box; display: flex; align-items: center; justify-content: flex-end; }
        .bar { width: 1px; height: 8px; background: #ccc; }
        .t { width: 12px; text-align: center; font-size: 7px; line-height: 10px; }
      </style>
      <ribbon-group launch label="Portapapeles" lw="33" style="width:48px">
        <big-button icon="ppaste" text="Pegar" lw="15" caret style="width:29px"></big-button>
        <div class="col" style="margin-left:-5px;padding-top:2px">
          <div><ui-icon name="pcut"></ui-icon></div>
          <div><ui-icon name="pcopy"></ui-icon><ui-icon class="c" name="caret"></ui-icon></div>
          <div><ui-icon name="format"></ui-icon></div>
        </div>
      </ribbon-group>
      <ribbon-group label="Diapositivas" lw="31" style="width:63px">
        <big-button icon="newslide" text="Nueva|diapositiva ▾" lw="17.500|33" style="width:42px"></big-button>
        <div class="col" style="margin-left:-2px;padding-top:2px">
          <div><ui-icon name="layout"></ui-icon><ui-icon class="c" name="caret"></ui-icon></div>
          <div><ui-icon name="reset"></ui-icon></div>
          <div><ui-icon name="section"></ui-icon><ui-icon class="c" name="caret"></ui-icon></div>
        </div>
      </ribbon-group>
      <ribbon-group launch label="Fuente" lw="18" style="width:127px">
        <div class="rows" style="padding:6px 0 0 2px">
          <div class="row" style="height:11px">
            <div class="combo" style="width:56px"><ui-icon name="caret"></ui-icon></div>
            <div class="combo" style="width:25px;gap:7px"><span>44</span><ui-icon name="caret"></ui-icon></div>
            <ui-icon name="growA" style="width:14px"></ui-icon><ui-icon name="growA" style="width:12px"></ui-icon><i class="bar" style="margin-right:2px"></i><ui-icon name="clear" style="width:11px"></ui-icon>
          </div>
          <div class="row" style="height:20px">
            <b class="t">N</b><i class="t">K</i><u class="t">S</u><span class="t">S</span><s class="t" style="font-size:5.500px">abc</s>
            <u class="t">AV</u><ui-icon name="caret" style="width:6px"></ui-icon><span class="t" style="margin-left:1px">Aa</span><ui-icon name="caret" style="width:6px"></ui-icon>
            <i class="bar" style="margin:0 3px 0 0"></i><span class="t">A</span><ui-icon name="caret" style="margin-left:2px"></ui-icon>
          </div>
        </div>
      </ribbon-group>
      <ribbon-group launch label="Párrafo" lw="19" style="width:87px">
        <div class="rows" style="padding:2px 0 0 4px;color:#bbb">
          <div class="row" style="height:11px"><ui-icon name="list"></ui-icon><ui-icon name="caret" style="width:11px"></ui-icon><ui-icon name="list"></ui-icon><ui-icon name="caret" style="width:10px"></ui-icon><ui-icon name="spacing" style="margin-left:5px"></ui-icon><ui-icon name="caret" style="width:8px"></ui-icon><ui-icon name="textdir"></ui-icon><ui-icon name="caret" style="width:7px"></ui-icon></div>
          <div class="row" style="height:11px"><ui-icon name="indent"></ui-icon><ui-icon name="indent" style="margin:0 3px"></ui-icon><i class="bar" style="margin:0 5px 0 2px"></i><ui-icon name="columns"></ui-icon><ui-icon name="caret" style="width:9px"></ui-icon><ui-icon name="vert" style="margin-left:11px"></ui-icon><ui-icon name="caret" style="width:7px"></ui-icon></div>
          <div class="row" style="height:12px;gap:3px"><ui-icon name="align"></ui-icon><ui-icon name="align"></ui-icon><ui-icon name="align"></ui-icon><ui-icon name="align"></ui-icon><ui-icon name="smart" style="margin-left:13px"></ui-icon><ui-icon name="caret"></ui-icon></div>
        </div>
      </ribbon-group>
      <ribbon-group launch label="Dibujo" lw="18" style="width:104px">
        <big-button icon="pshapes" text="Formas" lw="19" caret style="width:29px"></big-button>
        <big-button icon="arrange" text="Organizar" lw="25" caret style="width:22px"></big-button>
        <big-button grey icon="styles" text="Estilos|rápidos ▾" lw="17|25" style="width:32px"></big-button>
        <div class="col" style="margin-left:-1px">
          <div><ui-icon name="bucket2"></ui-icon><ui-icon class="c" name="caret"></ui-icon></div>
          <div><ui-icon name="pen2"></ui-icon><ui-icon class="c" name="caret"></ui-icon></div>
          <div><ui-icon name="effect"></ui-icon><ui-icon class="c" name="caret"></ui-icon></div>
        </div>
      </ribbon-group>
      <ribbon-group style="width:28px">
        <big-button icon="find" text="Edición" lw="19.500" caret style="width:27px;margin-top:-1px"></big-button>
      </ribbon-group>
      <ui-icon name="up" style="margin:40px 0 0 13px;height:5px"></ui-icon>
    `
  }
}
customElements.define('slides-ribbon', SlidesRibbon)

class SlideList extends HTMLElement {
  connectedCallback() {
    let rows = ''
    for (let n = 1; n <= 28; n++) {
      const dash = n === 9 || n === 19 ? '' : '<u></u>'
      rows += `<li${n === 3 ? ' class="on"' : ''}><span>${n}</span><i>${dash}</i>${n === 3 ? '<ui-icon name="cursor"></ui-icon>' : ''}</li>`
    }
    this.attachShadow({ mode: 'open' }).innerHTML = `
      <style>
        :host { display: block; width: 38px; height: 430px; overflow: hidden; }
        ul { list-style: none; margin: 0; padding: 5.250px 0 0; }
        li { height: 15.500px; display: flex; align-items: center; position: relative; font-size: 7px; line-height: 8px; color: #555; }
        span { width: 14px; text-align: right; }
        i { width: 7px; height: 6px; background: #fafafa; border: .5px solid #d8d8d8; box-sizing: border-box; margin-left: 7px; display: grid; place-items: center; }
        u { width: 4px; height: 1px; background: #c4c4c4; }
        .on { color: #d0492c; }
        .on i { outline: 2px solid #a8321c; width: 8px; }
        ui-icon { position: absolute; left: 23px; top: 7px; z-index: 1; }
      </style>
      <ul>${rows}</ul>
    `
  }
}
customElements.define('slide-list', SlideList)

class SlidePage extends HTMLElement {
  connectedCallback() {
    this.attachShadow({ mode: 'open' }).innerHTML = `
      <style>
        :host { display: block; box-sizing: border-box; width: 406px; height: 304px; background: #fff; border: 1px solid #d2d2d2; color: #10105a; font-family: "Liberation Serif", "Times New Roman", serif; font-size: 15.700px; }
        h1 { margin: 18px 0 0 79px; font: bold 23px/26px "Liberation Sans", Arial, sans-serif; color: #d90b0b; text-shadow: 1px 1px 1px #b9b9b9; }
        h1 ui-label { line-height: 26px; }
        ul { list-style: none; margin: 18.400px 34px 0 27px; padding: 0; }
        li { display: grid; grid-template-columns: 16px 1fr; margin-bottom: 3.200px; line-height: 19px; text-shadow: 1px 1px 1px #ccccda; }
        li > b { padding-left: 1px; font-weight: normal; }
        li div > div { text-align: justify; text-align-last: justify; white-space: nowrap; }
        li ui-label { line-height: 19px; }
        footer { font-size: 8px; text-align: right; margin: 58px 34px 0 0; line-height: 10px; color: #333; }
      </style>
      <h1><ui-label w="262">DEFINICION DE OPCION</ui-label></h1>
      <ul>
        <li><b>•</b><div><div>El Comprador de una Opcion, tiene el derecho, no</div><div>la obligacion, de comprar (Call) o vender (Put) un</div><div>contrato de futuros a un precio determinado (Precio</div><ui-label w="81">de Ejercicio)</ui-label></div></li>
        <li><b>•</b><div><div>El derecho es valido durante un periodo especifico</div><ui-label w="266">de tiempo (Plazo de ejericio de la Opcion)</ui-label></div></li>
        <li><b>•</b><div><div>Para obtener el derecho se abona una prima, la</div><ui-label w="200">prima es el precio de la Opcion.</ui-label></div></li>
      </ul>
      <footer>3</footer>
    `
  }
}
customElements.define('slide-page', SlidePage)

class SlidesWindow extends HTMLElement {
  connectedCallback() {
    const tabs = [['Archivo', 34, 21], ['Inicio', 19, 15], ['Insertar', 25, 20], ['Diseño', 24, 18], ['Transiciones', 37, 32], ['Animaciones', 40, 35],
      ['Presentación con diapositivas', 83.500, 78], ['Revisar', 23.500, 18.500], ['Vista', 18.500, 13], ['Ayuda', 22, 17.500], ['Foxit Reader PDF', 50, 45]]
    this.attachShadow({ mode: 'open' }).innerHTML = `
      <style>
        :host { display: flex; flex-direction: column; width: 480px; height: 520px; box-sizing: border-box; border: solid #b4705a; border-width: 0 1px 1px; background: #e6e6e6; }
        .head { background: #ba3f22 repeating-linear-gradient(125deg, transparent 0 24px, rgba(120, 25, 5, .1) 24px 29px); color: #fff; }
        .bar, .tabs, .status { display: flex; align-items: center; }
        .bar { height: 17px; }
        .tabs { height: 15px; }
        .tab { display: flex; justify-content: center; align-items: center; height: 9px; box-sizing: border-box; border-right: 1px solid rgba(255, 255, 255, .35); }
        .tab:first-child { border: 0; }
        .tab.on { height: 15px; background: #f4f3f2; color: #b7472a; border: 0; }
        .grow { flex: 1; }
        .body { display: flex; height: 430px; }
        .scroll { width: 8px; background: #d9d9d9; display: flex; flex-direction: column; align-items: center; color: #666; }
        .scroll ui-icon { background: #fff; width: 8px; height: 8px; flex: none; }
        .scroll div { width: 8px; background: #fff; margin-top: 1px; }
        .stage { flex: 1; border-left: 1px solid #d5d5d5; margin-left: 2px; padding: 62px 0 0 7px; box-sizing: border-box; }
        .status { height: 11px; background: #f3f2f1; color: #444; }
        .view { width: 20px; height: 11px; }
        .view.on { background: #cbcbcb; }
        .slider { width: 50px; height: 7px; display: flex; justify-content: center; background: linear-gradient(#aaa, #aaa) center / 100% 1px no-repeat; }
        .slider b { width: 3px; background: #666; margin-right: 6px; }
      </style>
      <div class="head">
        <div class="bar">
          <ui-icon name="save" style="width:27px"></ui-icon><ui-icon name="pundo" style="width:12px"></ui-icon><ui-icon name="predo" style="width:18px"></ui-icon><ui-icon name="show" style="width:11px"></ui-icon><ui-icon name="quick" style="width:17px"></ui-icon>
          <ui-label w="144" style="margin-left:30px">Opciones Integral[Compatibility Mode]  -  PowerPoint</ui-label>
          <div class="grow"></div>
          <ui-icon name="warn"></ui-icon><ui-label w="53" style="margin:0 5px">Juan Cruz Velazquez</ui-label><ui-icon name="avatar"></ui-icon>
          <ui-icon name="ribbonopt" style="width:32px"></ui-icon><ui-icon name="min" style="width:16px"></ui-icon><ui-icon name="max" style="width:30px"></ui-icon><ui-icon name="close" style="width:16px;margin-right:3px"></ui-icon>
        </div>
        <div class="tabs">
          ${tabs.map(([name, cell, w], i) => `<div class="tab${i === 1 ? ' on' : ''}" style="width:${cell}px"><ui-label w="${w}">${name}</ui-label></div>`).join('')}
          <ui-icon name="bulb" style="width:18px"></ui-icon><ui-label w="25">¿Qué des</ui-label>
          <div class="grow"></div>
          <ui-icon name="share"></ui-icon><ui-label w="28" style="margin:0 11px 0 2px">Compartir</ui-label>
        </div>
      </div>
      <slides-ribbon></slides-ribbon>
      <div class="body">
        <slide-list></slide-list>
        <div class="scroll"><ui-icon name="up" style="margin-top:2px"></ui-icon><div style="height:31px"></div><div class="grow" style="background:none"></div><ui-icon name="caret" style="margin-bottom:1px"></ui-icon></div>
        <div class="stage"><slide-page></slide-page></div>
        <div class="scroll" style="background:#e0e0e0"><ui-icon name="up" style="margin-top:2px"></ui-icon><div style="height:8px"></div><div class="grow" style="background:none"></div><ui-icon name="caret"></ui-icon><ui-icon name="quick" style="background:none"></ui-icon><ui-icon name="quick" style="background:none;margin-bottom:9px"></ui-icon></div>
      </div>
      <div class="status">
        <ui-label w="52" style="margin-left:3px">Diapositiva 3 de 360</ui-label><ui-icon name="spell" style="margin:0 8px"></ui-icon><ui-label w="51">Español (Argentina)</ui-label>
        <div class="grow"></div>
        <ui-icon name="notes"></ui-icon><ui-label w="15" style="margin:0 10px 0 1px">Notas</ui-label><ui-icon name="comment"></ui-icon><ui-label w="33" style="margin:0 9px 0 2px">Comentarios</ui-label>
        <ui-icon class="view on" name="normal"></ui-icon><ui-icon class="view" name="sorter"></ui-icon><ui-icon class="view" name="reading"></ui-icon><ui-icon class="view" name="screen"></ui-icon>
        <ui-icon name="min" style="width:9px"></ui-icon><div class="slider"><b></b></div><ui-label style="margin:0 7px 0 2px;font-size:7px">+</ui-label>
        <ui-label w="11">85%</ui-label><ui-icon name="fit" style="margin:0 8px 0 6px"></ui-icon>
      </div>
    `
  }
}
customElements.define('slides-window', SlidesWindow)

class TaskBar extends HTMLElement {
  connectedCallback() {
    const apps = [['cortana'], ['taskview'], ['calc'], ['plusapp'], ['chrome', 'open'], ['ppt', 'open front'], ['excel', 'open'], ['paintapp', 'open'], ['greenapp', 'open'], ['zoomapp', 'open']]
    this.attachShadow({ mode: 'open' }).innerHTML = `
      <style>
        :host { display: flex; align-items: center; height: 20px; background: #eee; color: #222; }
        .search { display: flex; align-items: center; width: 170px; height: 20px; background: #fff; box-sizing: border-box; padding-left: 5px; font-size: 7.500px; color: #555; margin-right: 1px; }
        .search ui-label { margin-left: 5px; line-height: 19px; }
        .app { width: 24.550px; height: 20px; box-sizing: border-box; }
        .open { background: linear-gradient(#2d6cb4, #2d6cb4) center bottom / 20px 2px no-repeat; }
        .front { background-color: #fafafa; }
        .grow { flex: 1; }
        .clock { display: flex; flex-direction: column; align-items: center; width: 40px; margin-left: -1px; }
        .clock ui-label { line-height: 9px; }
      </style>
      <ui-icon name="windows" style="width:25px"></ui-icon>
      <div class="search"><ui-icon name="search"></ui-icon><ui-label w="81">Escribe aquí para buscar</ui-label></div>
      ${apps.map(([name, state]) => `<ui-icon class="app ${state || ''}" name="${name}"></ui-icon>`).join('')}
      <div class="grow"></div>
      <ui-icon name="up" style="width:11px"></ui-icon><ui-icon name="network" style="width:12px"></ui-icon><ui-icon name="mic" style="width:12px"></ui-icon><ui-icon name="volume" style="width:12px"></ui-icon>
      <ui-label w="9.500" style="margin:0 2px 0 4px">ESP</ui-label>
      <div class="clock"><ui-label w="13">22:22</ui-label><ui-label w="26">27/5/2021</ui-label></div>
      <ui-icon name="bell" style="margin-right:12px"></ui-icon>
    `
  }
}
customElements.define('task-bar', TaskBar)

class DeskTop extends HTMLElement {
  connectedCallback() {
    this.attachShadow({ mode: 'open' }).innerHTML = `
      <style>
        :host { display: grid; grid-template-columns: 480px 480px; grid-template-rows: 520px 20px; width: 960px; height: 540px; overflow: hidden; }
        task-bar { grid-column: 1 / 3; }
      </style>
      <paint-window></paint-window>
      <slides-window></slides-window>
      <task-bar></task-bar>
    `
  }
}
customElements.define('desk-top', DeskTop)
</script>
</body>
</html>
